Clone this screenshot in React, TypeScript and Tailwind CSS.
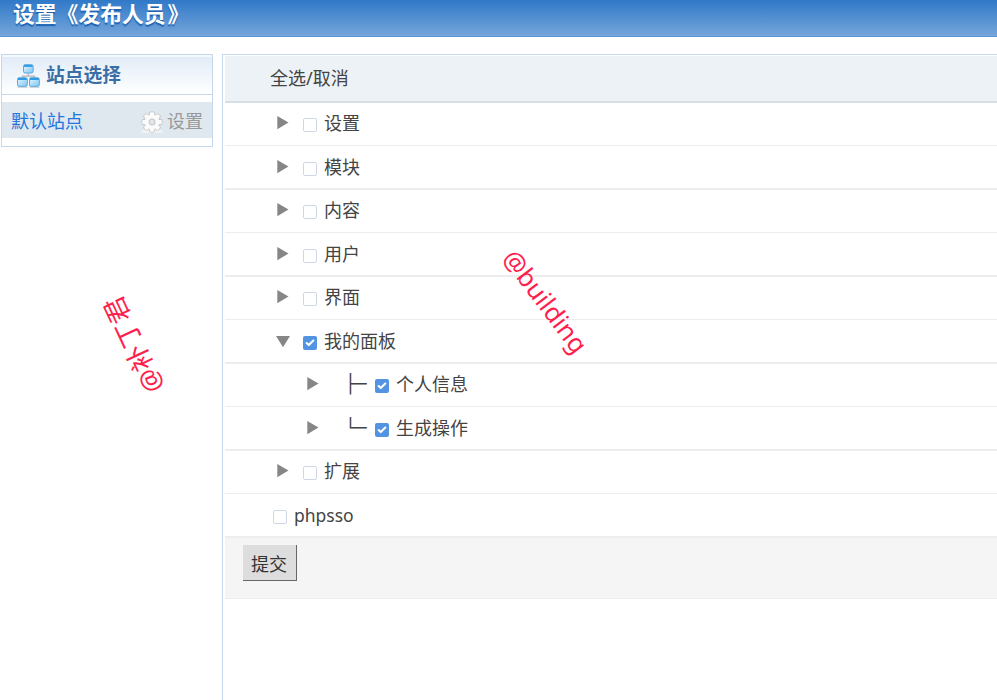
import { Check } from "lucide-react";
import clsx from "clsx";

interface MenuRow {
  label: string;
  checked?: boolean;
  open?: boolean;
  branch?: string;
  leaf?: boolean;
}

const rows: MenuRow[] = [
  { label: "设置" },
  { label: "模块" },
  { label: "内容" },
  { label: "用户" },
  { label: "界面" },
  { label: "我的面板", checked: true, open: true },
  { label: "个人信息", checked: true, branch: "├─" },
  { label: "生成操作", checked: true, branch: "└─" },
  { label: "扩展" },
  { label: "phpsso", leaf: true },
];

const teeth = [0, 45, 90, 135, 180, 225, 270, 315];

function Arrow({ open }: { open?: boolean }) {
  return (
    <svg width="14" height="14" viewBox="0 0 14 14" className="shrink-0" fill="#868686">
      {open ? <path d="M0 2H14L7 13.3Z" /> : <path d="M1.3 0V13.3L12.5 6.6Z" />}
    </svg>
  );
}

function Checkbox({ checked }: { checked?: boolean }) {
  return (
    <span
      className={clsx(
        "mt-[3px] flex h-[14px] w-[14px] shrink-0 items-center justify-center rounded-[2px]",
        checked ? "bg-[#5294e2]" : "border border-[#cfd6e6] bg-white"
      )}
    >
      {checked && <Check size={10} strokeWidth={5} className="text-white" />}
    </span>
  );
}

function Row({ row, even }: { row: MenuRow; even: boolean }) {
  return (
    <div
      className={clsx(
        "flex items-center border-[#ededed]",
        even ? "h-[44px] border-b-2" : "h-[43px] border-b pb-[2px]",
        row.leaf ? "pl-[48px]" : row.branch ? "pl-[81px]" : "pl-[51px]"
      )}
    >
      {!row.leaf && <Arrow open={row.open} />}
      {row.branch && (
        <span className="ml-[25px] w-[30px] whitespace-nowrap font-['DejaVu_Sans',monospace]">
          {row.branch}
        </span>
      )}
      <span className={row.leaf || row.branch ? "" : "ml-[13px]"}>
        <Checkbox checked={row.checked} />
      </span>
      <span className={clsx("ml-[7px]", row.leaf && "text-[17.5px]")}>{row.label}</span>
    </div>
  );
}

function SiteIcon() {
  return (
    <svg width="24" height="25" viewBox="0 0 24 25" fill="none">
      <defs>
        <linearGradient id="screen" x1="0" y1="0" x2="1" y2="1">
          <stop offset="0" stopColor="#eaf7ff" />
          <stop offset="1" stopColor="#7cc6f5" />
        </linearGradient>
      </defs>
      <path d="M0.5 23.2H10.5M12.5 23.2H22.5" stroke="#c4c4c4" />
      <path d="M11.3 9.5V12.5M5.5 14.5V12.2H17.5V14.5" stroke="#b3b3b3" strokeWidth="1.3" />
      <rect x="6.5" y="0.7" width="9.6" height="8.3" rx="1.6" fill="url(#screen)" stroke="#55a8e0" />
      <path d="M7 1.9H15.6" stroke="#329be6" strokeWidth="2" />
      <rect x="0.5" y="13.7" width="9.8" height="8.6" rx="1.6" fill="url(#screen)" stroke="#55a8e0" />
      <path d="M1 15H9.8" stroke="#329be6" strokeWidth="2" />
      <rect x="12.5" y="13.7" width="9.8" height="8.6" rx="1.6" fill="url(#screen)" stroke="#55a8e0" />
      <path d="M13 15H21.8" stroke="#329be6" strokeWidth="2" />
    </svg>
  );
}

function GearIcon() {
  return (
    <svg width="22" height="22" viewBox="0 0 22 22" fill="none">
      <rect x="0.5" y="19" width="21" height="3" rx="1.5" fill="#f0f2f4" />
      <g fill="#bfc1c3">
        {teeth.map((angle) => (
          <rect key={angle} x="8.3" y="0.5" width="5.4" height="6" rx="1.4" transform={`rotate(${angle} 11 11)`} />
        ))}
        <circle cx="11" cy="11" r="8.1" />
      </g>
      <g fill="#fbfbfb">
        {teeth.map((angle) => (
          <rect key={angle} x="9" y="1.2" width="4" height="5" rx="1" transform={`rotate(${angle} 11 11)`} />
        ))}
        <circle cx="11" cy="11" r="7.4" />
      </g>
      <circle cx="11" cy="11" r="2.9" fill="#e0e6ea" stroke="#c9cbcd" strokeWidth="1.2" />
    </svg>
  );
}

export default function App() {
  return (
    <div className="relative flex h-[700px] w-[997px] flex-col overflow-hidden bg-white font-['Noto_Sans','Noto_Sans_CJK_SC',sans-serif] text-[18px] leading-[26px] text-[#444]">
      <header className="h-[37px] shrink-0 border-b border-[#5c95d3] bg-gradient-to-b from-[#2f79c8] to-[#74a5da] pl-[13px]">
        <h1 className="text-[21.8px] leading-[28px] font-bold text-white [text-shadow:0_2px_1px_#1d62b0]">
          设置《发布人员<span className="ml-[2px]">》</span>
        </h1>
      </header>

      <div className="flex min-h-0 flex-1 pt-[17px]">
        <aside className="ml-px h-[93px] w-[212px] shrink-0 border border-[#c5d7ea]">
          <div className="flex h-[40px] items-center border-b border-[#c5d7ea] bg-gradient-to-b from-[#e0ebf7] to-white pl-[15px] shadow-[inset_0_2px_0_#f5f8fc]">
            <span className="mt-[4px]">
              <SiteIcon />
            </span>
            <span className="ml-[5px] text-[18.75px] font-bold text-[#3a6ea5]">站点选择</span>
          </div>
          <div className="mt-[7px] flex h-[36px] items-center bg-[#e0e8ef] pt-px pr-[9px] pl-[9px]">
            <span className="text-[#2376dd]">默认站点</span>
            <span className="mt-[3px] ml-auto">
              <GearIcon />
            </span>
            <span className="ml-[4px] text-[#999]">设置</span>
          </div>
        </aside>

        <main className="ml-[9px] min-w-0 flex-1 border-t border-l border-[#c5d7ea] pt-px pl-[2px]">
          <div className="h-[47px] border-b-2 border-[#d5dfe8] bg-[#edf2f6] pt-[9px] pl-[45px]">
            全选/取消
          </div>
          {rows.map((row, index) => (
            <Row key={row.label} row={row} even={index % 2 === 1} />
          ))}
          <div className="h-[61px] border-b border-[#ededed] bg-[#f5f5f5] pt-[7px] pl-[18px]">
            <button className="h-[36px] w-[54px] border-r border-b border-[#666] bg-[#ddd] pt-[3px] pr-px text-[#333]">
              提交
            </button>
          </div>
        </main>
      </div>

      <span className="absolute top-[345px] left-[133px] -translate-x-1/2 -translate-y-1/2 rotate-[-115deg] text-[26.5px] whitespace-nowrap text-[#ff1f4f]">
        @补丁君
      </span>
      <span className="absolute top-[301px] left-[546px] -translate-x-1/2 -translate-y-1/2 rotate-[53deg] text-[25.5px] whitespace-nowrap text-[#ff1f4f]">
        @building
      </span>
    </div>
  );
}
